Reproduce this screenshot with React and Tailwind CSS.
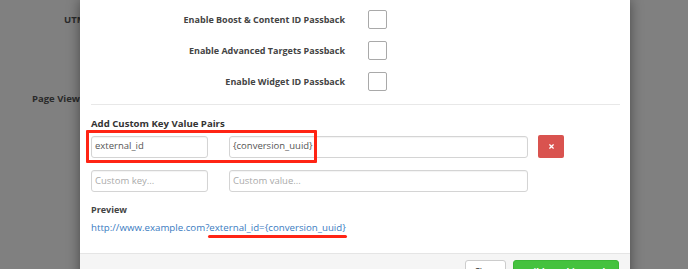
import React from 'react';
import { FaTimes } from 'react-icons/fa';

const Checkbox = () => (
  <span className="block w-[19px] h-[19px] border border-[#a9a9a9] rounded-[2px] bg-white" />
);

const Toggle = ({ label }) => (
  <div className="flex items-center h-[31px]">
    <span className="w-[254px] text-right font-bold text-[9px] text-[#444]">{label}</span>
    <span className="ml-[23px]">
      <Checkbox />
    </span>
  </div>
);

const Field = ({ value, placeholder, width }) => (
  <div
    className={`${width} h-[22px] border border-[#d4d4d4] rounded-[3px] bg-white flex items-center px-[3px] text-[9.5px] shadow-[inset_0_1px_1px_rgba(0,0,0,0.05)] ${
      value ? 'text-[#555]' : 'text-[#aaa]'
    }`}
  >
    {value || placeholder}
  </div>
);

export default function App() {
  return (
    <div
      className="relative w-[688px] h-[269px] overflow-hidden bg-[#808080]"
      style={{ fontFamily: '"Open Sans", "Liberation Sans", sans-serif' }}
    >
      {/* page behind the overlay */}
      <div className="pt-[13px] font-bold text-[9.5px] text-[#2a2a2a] leading-[14px]">
        <div className="ml-[64px]">UTM Parameters</div>
        <div className="ml-[32px] mt-[65px]">Page View Tracking</div>
      </div>

      {/* modal */}
      <div className="absolute left-[80px] top-0 w-[550px] h-[300px] bg-white shadow-[0_0_12px_rgba(0,0,0,0.45)]">
        <div className="pl-[11px] pr-[10px] pt-[4px]">
          <Toggle label="Enable Boost & Content ID Passback" />
          <Toggle label="Enable Advanced Targets Passback" />
          <Toggle label="Enable Widget ID Passback" />

          <div className="mt-[7px] h-px bg-[#e8e8e8]" />

          <div className="mt-[12px] font-bold text-[9.6px] leading-[14px] text-[#333]">
            Add Custom Key Value Pairs
          </div>

          <div className="mt-[4px] flex items-center">
            <Field value="external_id" width="w-[117px]" />
            <div className="ml-[21px]">
              <Field value="{conversion_uuid}" width="w-[299px]" />
            </div>
            <button className="ml-[10px] w-[26px] h-[23px] bg-[#d9534f] rounded-[2px] flex items-center justify-center text-white">
              <FaTimes size={7} />
            </button>
          </div>

          <div className="mt-[12px] flex items-center">
            <Field placeholder="Custom key..." width="w-[117px]" />
            <div className="ml-[21px]">
              <Field placeholder="Custom value..." width="w-[299px]" />
            </div>
          </div>

          <div className="mt-[11px] font-bold text-[9px] leading-[14px] text-[#444]">Preview</div>
          <div className="mt-[4px] text-[9.7px] leading-[14px] text-[#3a7bbf]">
            http://www.example.com?external_id={'{conversion_uuid}'}
          </div>
        </div>

        <div className="mt-[18px] border-t border-[#e5e5e5] bg-[#f5f5f5] h-[60px] flex justify-end gap-[7px] pr-[11px] pt-[6px]">
          <button className="w-[41px] h-[26px] bg-white border border-[#ccc] rounded-[3px] text-[9px] text-[#333] pt-[4px] flex justify-center items-start">
            Close
          </button>
          <button className="w-[106px] h-[26px] bg-[#45c23e] border border-[#3cb636] rounded-[3px] text-[9px] font-bold text-white pt-[4px] flex justify-center items-start">
            Build Tracking Code
          </button>
        </div>

        {/* annotations */}
        <div className="absolute left-[6px] top-[130px] w-[231px] h-[33px] border-[3px] border-[#ff2414] rounded-[1px]" />
        <div className="absolute left-[128px] top-[235px] w-[139px] h-[3px] bg-[#ff2414] rounded-full" />
      </div>
    </div>
  );
}
